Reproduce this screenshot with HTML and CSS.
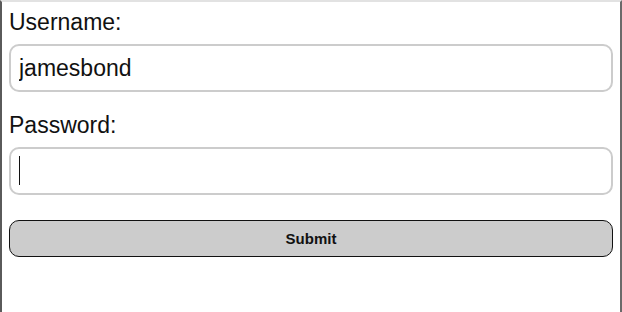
FILE: index.html
```html
<!DOCTYPE html>
<html>
<head>
<meta charset="utf-8">
<link rel="stylesheet" href="styles.css">
</head>
<body>
<div class="frame">
  <form class="login">
    <label class="label" for="user">Username:</label>
    <input class="field" id="user" type="text" value="jamesbond">
    <label class="label" for="pass">Password:</label>
    <div class="field-wrap">
      <input class="field" id="pass" type="password" value="">
      <span class="caret"></span>
    </div>
    <button class="submit" type="button">Submit</button>
  </form>
</div>
</body>
</html>
```
FILE: styles.css
```css
html, body {
  margin: 0;
  padding: 0;
  background: #fff;
}
.frame {
  box-sizing: border-box;
  width: 622px;
  height: 312px;
  border-left: 2px solid #5a5a5a;
  border-right: 2px solid #6a6a6a;
  border-top: 2px solid #e2e2e2;
  padding: 5px 7px 0 7px;
  font-family: "Liberation Sans", Arial, sans-serif;
}
.login {
  display: flex;
  flex-direction: column;
}
.label {
  font-size: 23px;
  line-height: 31px;
  color: #111;
  margin-bottom: 6px;
}
.field-wrap {
  position: relative;
  display: flex;
  flex-direction: column;
}
.field {
  box-sizing: border-box;
  height: 48px;
  border: 2px solid #cccccc;
  border-radius: 10px;
  padding: 0 8px;
  font-family: "Liberation Sans", Arial, sans-serif;
  font-size: 23px;
  color: #111;
  background: #fff;
  outline: none;
  margin: 0 0 18px 0;
}
.caret {
  position: absolute;
  left: 10px;
  top: 9px;
  width: 1px;
  height: 29px;
  background: #111;
}
.submit {
  box-sizing: border-box;
  height: 37px;
  margin-top: 7px;
  border: 1px solid #111;
  border-radius: 10px;
  background: #cccccc;
  font-family: "Liberation Sans", Arial, sans-serif;
  font-weight: bold;
  font-size: 15px;
  color: #111;
}
```
